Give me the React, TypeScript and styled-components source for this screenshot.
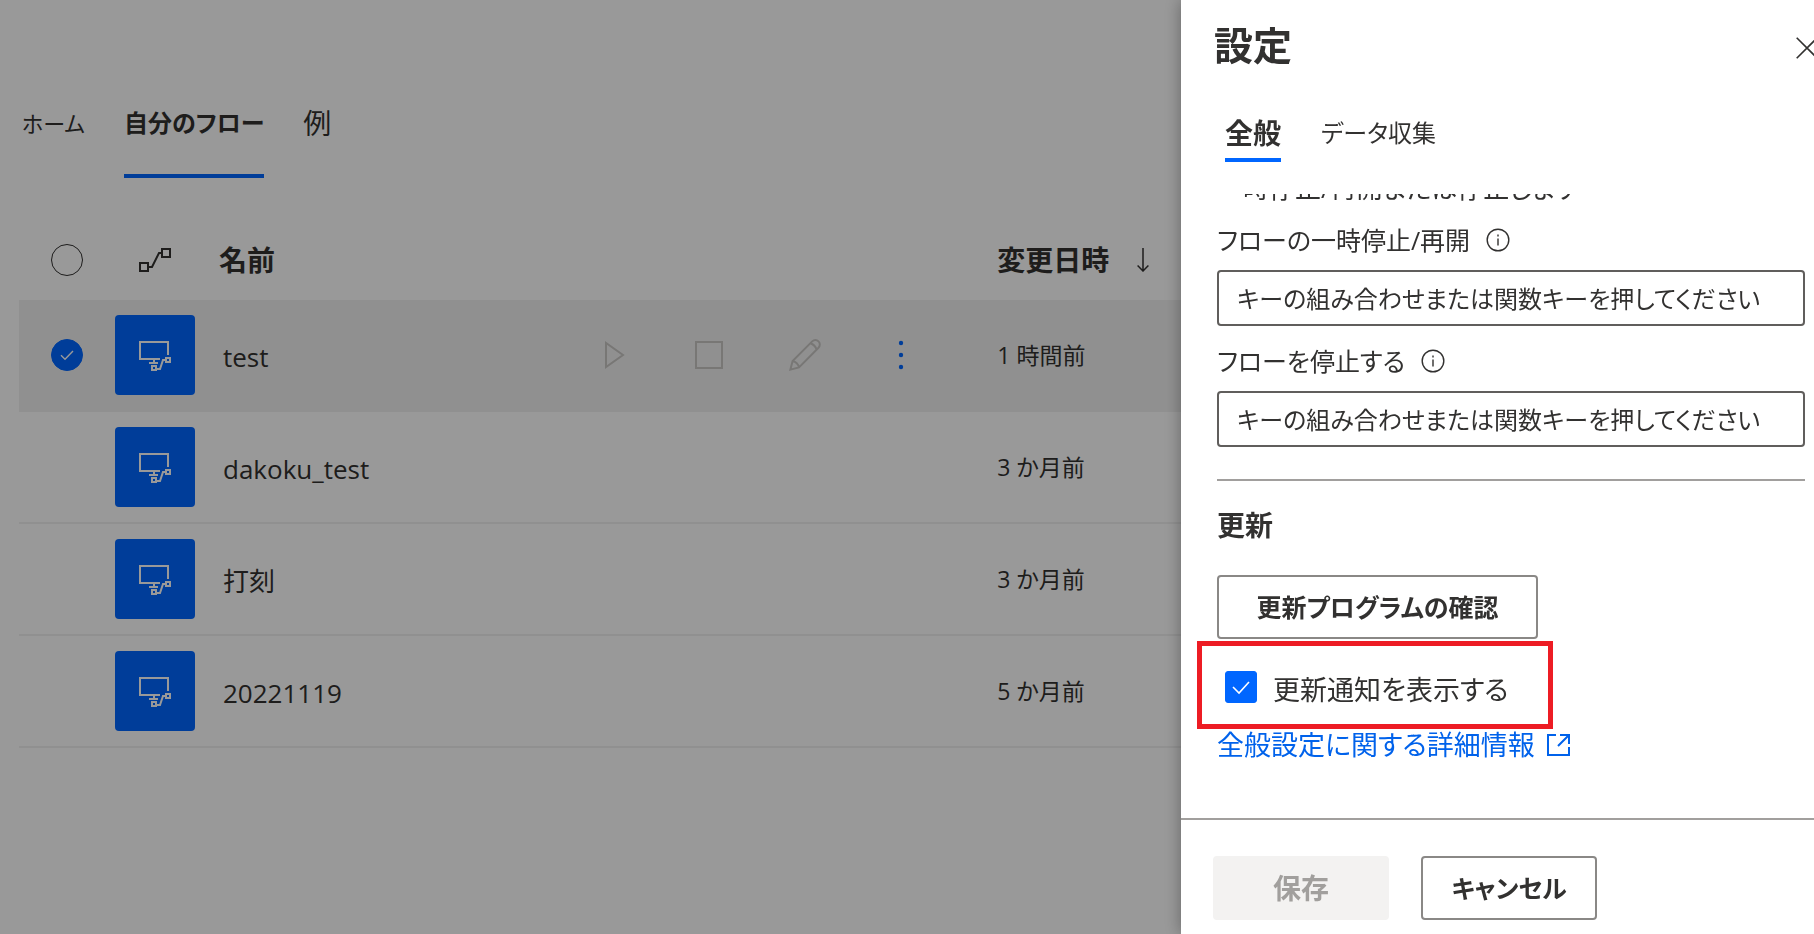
import React from "react";
import styled, { createGlobalStyle } from "styled-components";

const blue = "#0066ff";
const ink = "#323130";

const GlobalStyle = createGlobalStyle`
  *, *::before, *::after { box-sizing: border-box; }
  body {
    margin: 0;
    background: #ffffff;
    color: ${ink};
    font-family: "Open Sans", "Noto Sans CJK JP", sans-serif;
    font-size: 27px;
    line-height: 32px;
    font-feature-settings: "palt";
  }
  button, input { font: inherit; color: inherit; font-feature-settings: inherit; }
  svg { display: block; flex: none; }
`;

const Page = styled.main`
  min-height: 100vh;
  padding: 107px 0 0 19px;
`;

const Tabs = styled.div.attrs({ role: "tablist" })<{ $gap: number }>`
  display: flex;
  gap: ${(p) => p.$gap}px;
`;

const Tab = styled.button.attrs({ type: "button", role: "tab" })<{ $active?: boolean; $drop: number; $size: number }>`
  border: 0;
  border-bottom: 4px solid ${(p) => (p.$active ? blue : "transparent")};
  background: none;
  padding: 0 0 ${(p) => p.$drop}px;
  font-size: ${(p) => p.$size}px;
  line-height: 32px;
  font-weight: ${(p) => (p.$active ? 700 : 400)};
  white-space: nowrap;
`;

const FlowTabs = styled(Tabs)`
  padding-left: 3px;
`;

const FlowTable = styled.table`
  width: 100%;
  margin-top: 44px;
  table-layout: fixed;
  border-collapse: separate;
  border-spacing: 0;
`;

const HeadCell = styled.th<{ $width?: string }>`
  width: ${(p) => p.$width ?? "auto"};
  height: 78px;
  padding: 0 0 2px;
  text-align: left;
  font-size: 28px;
  font-weight: 700;
`;

const Row = styled.tr<{ $selected?: boolean }>`
  background: ${(p) => (p.$selected ? "#f1f1f1" : "transparent")};
`;

const Cell = styled.td<{ $small?: boolean }>`
  height: 112px;
  padding: 0;
  border-bottom: 2px solid #f1f1f1;
  font-size: ${(p) => (p.$small ? 23 : 26)}px;
`;

const Inset = styled.div<{ $left: number }>`
  display: flex;
  align-items: center;
  padding-left: ${(p) => p.$left}px;
`;

const FlowName = styled.span`
  padding-top: 3px;
`;

const RoundCheck = styled.input.attrs({ type: "checkbox" })`
  appearance: none;
  display: block;
  width: 32px;
  height: 32px;
  margin: 0 0 0 32px;
  border: 1px solid ${ink};
  border-radius: 50%;
  &:checked {
    border-color: ${blue};
    background: ${blue} url("data:image/svg+xml,%3Csvg xmlns='http://www.w3.org/2000/svg' viewBox='0 0 32 32' fill='none' stroke='white' stroke-width='1.4'%3E%3Cpath d='M10 16.3l4 4 8-8.200'/%3E%3C/svg%3E") center / 32px;
  }
`;

const Tile = styled.div`
  display: flex;
  align-items: center;
  justify-content: center;
  width: 80px;
  height: 80px;
  border-radius: 4px;
  background: ${blue};
`;

const Actions = styled.div`
  display: flex;
  margin-left: auto;
  padding-right: 48px;
`;

const IconButton = styled.button.attrs({ type: "button" })`
  display: flex;
  justify-content: center;
  width: 96px;
  border: 0;
  padding: 0;
  background: none;
`;

const SortLabel = styled.div`
  display: flex;
  align-items: center;
  gap: 28px;
`;

const Overlay = styled.div`
  position: fixed;
  inset: 0;
  background: rgba(0, 0, 0, 0.4);
`;

const Panel = styled.section`
  position: fixed;
  top: 0;
  right: 0;
  bottom: 0;
  display: flex;
  flex-direction: column;
  width: 633px;
  max-width: 100%;
  background: #ffffff;
  box-shadow: 0 0 16px rgba(0, 0, 0, 0.35);
  clip-path: inset(0 0 0 -40px);
`;

const PanelHeader = styled.header`
  display: flex;
  justify-content: space-between;
  align-items: center;
  padding: 19px 0 0 33px;
`;

const PanelTitle = styled.h1`
  margin: 0;
  font-size: 39px;
  line-height: 52px;
  font-weight: 700;
`;

const CloseButton = styled.button.attrs({ type: "button" })`
  flex: none;
  margin-right: -4px;
  border: 0;
  padding: 6px 0 0;
  background: none;
`;

const PanelTabs = styled(Tabs)`
  padding: 46px 0 0 44px;
`;

const PanelBody = styled.div`
  flex: 1;
  min-height: 0;
  margin-top: 32px;
  padding: 0 9px 0 36px;
  overflow: hidden;
`;

const Description = styled.p`
  margin: -22px 0 -1px;
  font-size: 26px;
`;

const FieldLabel = styled.div`
  display: flex;
  align-items: center;
  gap: 16px;
  padding: 21px 0 14px;
  font-size: 25px;
`;

const KeyInput = styled.input.attrs({ type: "text" })`
  display: block;
  width: 100%;
  height: 56px;
  margin-bottom: -2px;
  border: 2px solid #605e5c;
  border-radius: 4px;
  padding: 0 18px;
  background: #ffffff;
  font-size: 24px;
  &::placeholder { color: ${ink}; opacity: 1; }
`;

const Section = styled.section`
  margin-top: 34px;
  border-top: 2px solid #a19f9d;
  padding-top: 28px;
`;

const SectionTitle = styled.h2`
  margin: 0 0 34px;
  font-size: 28px;
  line-height: 32px;
  font-weight: 700;
`;

const Button = styled.button.attrs({ type: "button" })<{ $width: number }>`
  display: block;
  width: ${(p) => p.$width}px;
  height: 64px;
  border: 2px solid #8a8886;
  border-radius: 4px;
  padding: 0;
  background: #ffffff;
  font-size: 25px;
  font-weight: 700;
  &:disabled {
    border-color: #f3f2f1;
    background: #f3f2f1;
    color: #a19f9d;
    font-size: 28px;
  }
`;

const NoticeRow = styled.div`
  position: relative;
  display: flex;
  align-items: center;
  padding: 29px 0 23px 8px;
`;

const Highlight = styled.div`
  position: absolute;
  top: 2px;
  left: -20px;
  width: 356px;
  height: 88px;
  border: 5px solid #ed1c24;
  pointer-events: none;
`;

const Check = styled.input.attrs({ type: "checkbox" })`
  appearance: none;
  flex: none;
  width: 32px;
  height: 32px;
  margin: 0 16px 0 0;
  border: 1px solid ${ink};
  border-radius: 3px;
  &:checked {
    border-color: ${blue};
    background: ${blue} url("data:image/svg+xml,%3Csvg xmlns='http://www.w3.org/2000/svg' viewBox='0 0 32 32' fill='none' stroke='white' stroke-width='1.6'%3E%3Cpath d='M8 16l6 6 10-11'/%3E%3C/svg%3E") center / 32px;
  }
`;

const CheckLabel = styled.label`
  padding-top: 6px;
`;

const MoreLink = styled.a`
  display: flex;
  align-items: center;
  gap: 12px;
  width: max-content;
  color: #0062eb;
  text-decoration: none;
`;

const PanelFooter = styled.footer`
  display: flex;
  gap: 32px;
  border-top: 2px solid #a19f9d;
  padding: 36px 32px 14px;
`;

const FlowHeadIcon = () => (
  <svg width="32" height="32" viewBox="0 0 32 32" fill="none" stroke={ink} strokeWidth="2" aria-hidden="true">
    <rect x="1" y="19" width="8" height="8" />
    <rect x="23" y="5" width="8" height="8" />
    <path d="M10 23h3l7-14h3" />
  </svg>
);

const DesktopFlowIcon = () => (
  <svg width="32" height="32" viewBox="0 0 32 32" fill="none" stroke="#ffffff" strokeWidth="2" aria-hidden="true">
    <path d="M29 16V3H1v17h20M15 21v3M10 24h9" />
    <rect x="13" y="27" width="4" height="4" />
    <rect x="27" y="19" width="4" height="4" />
    <path d="M18 30h3l3-9h3" />
  </svg>
);

const muted = "#c8c6c4";

const PlayIcon = () => (
  <svg width="32" height="32" viewBox="0 0 32 32" fill="none" stroke={muted} strokeWidth="2" aria-hidden="true">
    <path d="M9 4v24l17-12z" />
  </svg>
);

const StopIcon = () => (
  <svg width="32" height="32" viewBox="0 0 32 32" fill="none" stroke={muted} strokeWidth="2" aria-hidden="true">
    <rect x="3" y="3" width="26" height="26" />
  </svg>
);

const PencilIcon = () => (
  <svg width="32" height="32" viewBox="0 0 32 32" fill="none" stroke={muted} strokeWidth="2" aria-hidden="true">
    <path d="M1.400 30.600L3.600 22 23.200 2.400a4.400 4.400 0 0 1 6.300 6.300L10 28.400zM21.400 4.300c2.800 1 5.200 3.300 6.200 6.200M3.600 22c3.200.8 5.600 3.200 6.400 6.400" />
  </svg>
);

const MoreIcon = () => (
  <svg width="32" height="32" viewBox="0 0 32 32" fill={blue} aria-hidden="true">
    <circle cx="16" cy="4" r="2.200" />
    <circle cx="16" cy="16" r="2.200" />
    <circle cx="16" cy="28" r="2.200" />
  </svg>
);

const SortIcon = () => (
  <svg width="12" height="24" viewBox="0 0 12 24" fill="none" stroke={ink} strokeWidth="1.500" aria-hidden="true">
    <path d="M6 0v23M.600 17.500L6 23l5.400-5.500" />
  </svg>
);

const CloseIcon = () => (
  <svg width="22" height="22" viewBox="0 0 22 22" fill="none" stroke={ink} strokeWidth="1.600" aria-hidden="true">
    <path d="M.700.700l20.600 20.600M21.300.700L.700 21.300" />
  </svg>
);

const InfoIcon = () => (
  <svg width="24" height="24" viewBox="0 0 24 24" fill="none" stroke={ink} strokeWidth="1.400" aria-hidden="true">
    <circle cx="12" cy="12" r="10.800" />
    <path d="M12 10.500v7M12 6.500v2" />
  </svg>
);

const ExternalIcon = () => (
  <svg width="24" height="24" viewBox="0 0 24 24" fill="none" stroke="#0062eb" strokeWidth="2" aria-hidden="true">
    <path d="M9 2H1v20h21v-8M13 2h9v9M22 2L11 13" />
  </svg>
);

const flows = [
  { name: "test", modified: "1 時間前", selected: true },
  { name: "dakoku_test", modified: "3 か月前" },
  { name: "打刻", modified: "3 か月前" },
  { name: "20221119", modified: "5 か月前" },
];

const keyHint = "キーの組み合わせまたは関数キーを押してください";

const keyFields = [
  { id: "pause-key", label: "フローの一時停止/再開" },
  { id: "stop-key", label: "フローを停止する" },
];

export default function App() {
  return (
    <>
      <GlobalStyle />
      <Page>
        <FlowTabs $gap={39}>
          <Tab $drop={35} $size={22}>ホーム</Tab>
          <Tab $active $drop={35} $size={24} aria-selected>自分のフロー</Tab>
          <Tab $drop={35} $size={28}>例</Tab>
        </FlowTabs>
        <FlowTable>
          <thead>
            <tr>
              <HeadCell $width="96px"><RoundCheck aria-label="すべて選択" /></HeadCell>
              <HeadCell $width="104px"><Inset $left={24}><FlowHeadIcon /></Inset></HeadCell>
              <HeadCell>名前</HeadCell>
              <HeadCell $width="45.5%"><SortLabel>変更日時<SortIcon /></SortLabel></HeadCell>
            </tr>
          </thead>
          <tbody>
            {flows.map((flow) => (
              <Row key={flow.name} $selected={flow.selected}>
                <Cell>{flow.selected && <RoundCheck defaultChecked aria-label={flow.name} />}</Cell>
                <Cell><Tile><DesktopFlowIcon /></Tile></Cell>
                <Cell>
                  <Inset $left={4}>
                    <FlowName>{flow.name}</FlowName>
                    {flow.selected && (
                      <Actions>
                        <IconButton aria-label="実行"><PlayIcon /></IconButton>
                        <IconButton aria-label="停止"><StopIcon /></IconButton>
                        <IconButton aria-label="編集"><PencilIcon /></IconButton>
                        <IconButton aria-label="その他"><MoreIcon /></IconButton>
                      </Actions>
                    )}
                  </Inset>
                </Cell>
                <Cell $small>{flow.modified}</Cell>
              </Row>
            ))}
          </tbody>
        </FlowTable>
      </Page>
      <Overlay />
      <Panel role="dialog" aria-labelledby="settings-title">
        <PanelHeader>
          <PanelTitle id="settings-title">設定</PanelTitle>
          <CloseButton aria-label="閉じる"><CloseIcon /></CloseButton>
        </PanelHeader>
        <PanelTabs $gap={40}>
          <Tab $active $drop={9} $size={28} aria-selected>全般</Tab>
          <Tab $drop={9} $size={24}>データ収集</Tab>
        </PanelTabs>
        <PanelBody>
          <Description>一時停止/再開または停止します</Description>
          {keyFields.map((field) => (
            <React.Fragment key={field.id}>
              <FieldLabel>
                <label htmlFor={field.id}>{field.label}</label>
                <InfoIcon />
              </FieldLabel>
              <KeyInput id={field.id} placeholder={keyHint} />
            </React.Fragment>
          ))}
          <Section>
            <SectionTitle>更新</SectionTitle>
            <Button $width={321}>更新プログラムの確認</Button>
            <NoticeRow>
              <Check id="notice" defaultChecked />
              <CheckLabel htmlFor="notice">更新通知を表示する</CheckLabel>
              <Highlight />
            </NoticeRow>
            <MoreLink href="#general">全般設定に関する詳細情報<ExternalIcon /></MoreLink>
          </Section>
        </PanelBody>
        <PanelFooter>
          <Button $width={176} disabled>保存</Button>
          <Button $width={176}>キャンセル</Button>
        </PanelFooter>
      </Panel>
    </>
  );
}
